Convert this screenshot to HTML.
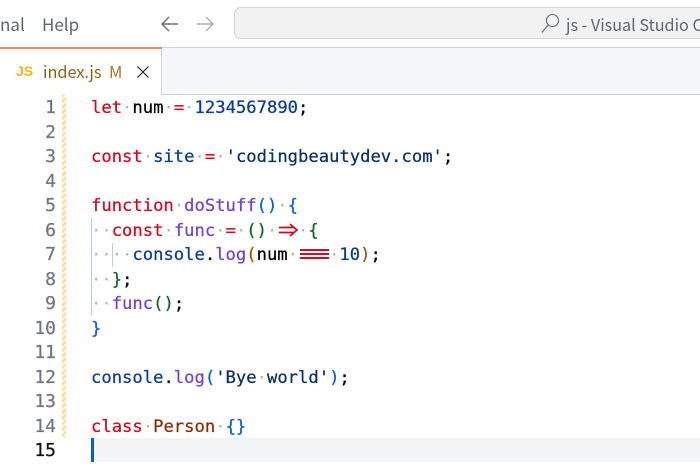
<!DOCTYPE html>
<html><head><meta charset="utf-8">
<style>
html,body{margin:0;padding:0;background:#fff}
#r{position:relative;width:700px;height:472px;overflow:hidden;background:#fff}
.a{position:absolute}
.ui{font-family:"Noto Sans CJK JP","Liberation Sans",sans-serif;white-space:pre}
.l,.n{position:absolute;font-family:"DejaVu Sans Mono","Liberation Mono",monospace;font-size:17.2px;line-height:24px;white-space:pre;margin-top:1px;-webkit-text-stroke:.25px currentColor}
.l{left:91px;color:#000}
.n{left:20px;width:36px;text-align:right;color:#6e7781;font-size:18px}
.k{color:#cf0a1f}.f{color:#6f42d8}.b{color:#0a3a9c}.s{color:#0a2f6b}
.d{color:#aab4bf;-webkit-text-stroke:0}.bl{color:#0a5fd6}.g{color:#116329}.o{color:#9a5b0c}.c{color:#8a2a05}.t{color:#0a3069}
.arr{display:inline-block;width:20.7px;height:10px;position:relative}
</style></head><body>
<div id="r">
<div class="a ui" style="left:0;top:12px;font-size:17px;line-height:24px;color:#5c6670">nal</div>
<div class="a ui" style="left:42px;top:12px;font-size:17px;line-height:24px;color:#5c6670">Help</div>
<svg class="a" style="left:160px;top:14px" width="56" height="20" viewBox="0 0 56 20" fill="none">
<path d="M18 10H2M9 3L2 10L9 17" stroke="#66707a" stroke-width="1.4"/>
<path d="M37 10H53M46 3L53 10L46 17" stroke="#a8aeb4" stroke-width="1.4"/>
</svg>
<div class="a" style="left:234px;top:7px;width:480px;height:30px;background:#f2f2f2;border:1px solid #d6d6d6;border-radius:7px"></div>
<svg class="a" style="left:540px;top:12px" width="22" height="22" viewBox="0 0 22 22" fill="none">
<circle cx="12.5" cy="8.5" r="6" stroke="#5f666d" stroke-width="1.1"/>
<path d="M8.3 13L2 20.5" stroke="#5f666d" stroke-width="1.1"/>
</svg>
<div class="a ui" style="left:566px;top:12px;font-size:16.2px;line-height:24px;color:#5c6670">js - Visual Studio C</div>

<div class="a" style="left:162px;top:47px;width:538px;height:48px;background:#f6f7f9;border-top:1px solid #ccd4de;border-bottom:1px solid #ccd4de;box-sizing:border-box"></div>
<div class="a" style="left:0;top:47px;width:162px;height:48px;background:#fff;border-right:1px solid #ccd4de;box-sizing:border-box"></div>
<div class="a" style="left:0;top:47px;width:162px;height:2px;background:#f5836c"></div>
<div class="a" style="left:16px;top:62px;font-family:'Liberation Sans',sans-serif;font-size:14px;font-weight:700;line-height:18px;color:#f5b21d">JS</div>
<div class="a ui" style="left:43px;top:59px;font-size:16.3px;line-height:24px;color:#8f5f10">index.js</div>
<div class="a ui" style="left:109px;top:59px;font-size:16.5px;line-height:24px;color:#a8761e">M</div>
<svg class="a" style="left:136px;top:65px" width="14" height="14" viewBox="0 0 14 14" fill="none"><path d="M1.5 1.5L12.5 12.5M12.5 1.5L1.5 12.5" stroke="#222" stroke-width="1.2"/></svg>

<!-- modified gutter -->
<div class="a" style="left:62px;top:95px;width:4px;height:343px;background:repeating-linear-gradient(135deg,#f6dea0 0 2px,#fdf5e0 2px 4px)"></div>
<!-- current line -->
<div class="a" style="left:91px;top:438px;width:609px;height:24px;background:#f3f4f6"></div>
<div class="a" style="left:91px;top:438px;width:2.5px;height:24px;background:#0a5fd6"></div>
<!-- indent guides -->
<div class="a" style="left:91px;top:218px;width:1px;height:98px;background:#b5cbe6"></div>
<div class="a" style="left:112px;top:243px;width:1px;height:24px;background:#b4d8bb"></div>

<div class="n" style="top:95px">1</div>
<div class="n" style="top:119.5px">2</div>
<div class="n" style="top:144px">3</div>
<div class="n" style="top:168.5px">4</div>
<div class="n" style="top:193px">5</div>
<div class="n" style="top:217.5px">6</div>
<div class="n" style="top:242px">7</div>
<div class="n" style="top:266.5px">8</div>
<div class="n" style="top:291px">9</div>
<div class="n" style="top:315.5px">10</div>
<div class="n" style="top:340px">11</div>
<div class="n" style="top:364.5px">12</div>
<div class="n" style="top:389px">13</div>
<div class="n" style="top:413.5px">14</div>
<div class="n" style="top:438px;color:#111">15</div>

<div class="l" style="top:95px"><span class="k">let</span><span class="d">·</span>num<span class="d">·</span><span class="k">=</span><span class="d">·</span><span class="b">1234567890</span>;</div>
<div class="l" style="top:144px"><span class="k">const</span><span class="d">·</span><span class="b">site</span><span class="d">·</span><span class="k">=</span><span class="d">·</span><span class="t">'codingbeautydev.com'</span>;</div>
<div class="l" style="top:193px"><span class="k">function</span><span class="d">·</span><span class="f">doStuff</span><span class="bl">()</span><span class="d">·</span><span class="bl">{</span></div>
<div class="l" style="top:217.5px"><span class="d">··</span><span class="k">const</span><span class="d">·</span><span class="f">func</span><span class="d">·</span><span class="k">=</span><span class="d">·</span><span class="g">()</span><span class="d">·</span><span class="arr"></span><span class="d">·</span><span class="g">{</span></div>
<svg class="a" style="left:278px;top:223px" width="22" height="14" viewBox="0 0 22 14" fill="none"><path d="M1 4.5H16M1 9.5H16M12 1L19 7L12 13" stroke="#cf0a1f" stroke-width="1.7"/></svg>
<div class="l" style="top:242px"><span class="d">····</span><span class="b">console</span>.<span class="f">log</span><span class="o">(</span>num<span class="d">·</span><span style="display:inline-block;width:31px"></span><span class="d">·</span><span class="b">10</span><span class="o">)</span>;</div>
<div class="a" style="left:300px;top:249px;width:29px;height:2px;background:#c8102e"></div>
<div class="a" style="left:300px;top:253px;width:29px;height:2px;background:#c8102e"></div>
<div class="a" style="left:300px;top:257px;width:29px;height:2px;background:#c8102e"></div>
<div class="l" style="top:266.5px"><span class="d">··</span><span class="g">}</span>;</div>
<div class="l" style="top:291px"><span class="d">··</span><span class="f">func</span><span class="g">()</span>;</div>
<div class="l" style="top:315.5px"><span class="bl">}</span></div>
<div class="l" style="top:364.5px"><span class="b">console</span>.<span class="f">log</span><span class="bl">(</span><span class="t">'Bye</span><span class="d">·</span><span class="t">world'</span><span class="bl">)</span>;</div>
<div class="l" style="top:413.5px"><span class="k">class</span><span class="d">·</span><span class="c">Person</span><span class="d">·</span><span class="bl">{}</span></div>
</div>
</body></html>
